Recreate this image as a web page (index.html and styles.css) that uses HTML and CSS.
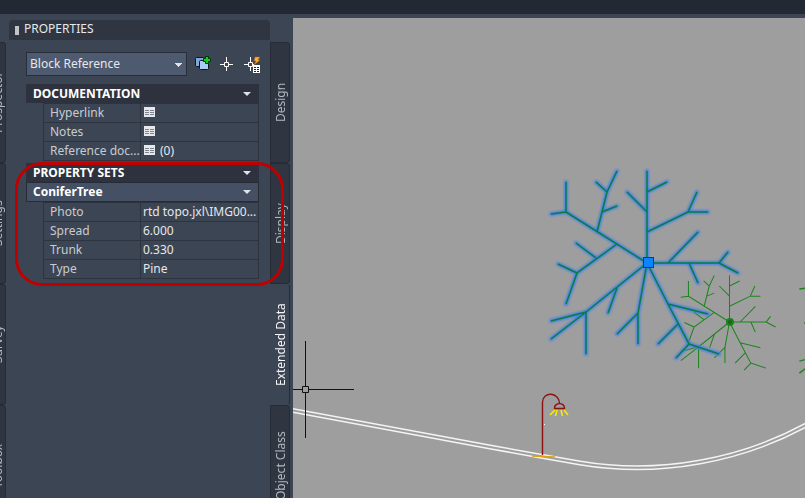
FILE: index.html
```html
<!DOCTYPE html>
<html lang="en">

<head>
    <meta charset="UTF-8">
    <meta name="viewport" content="width=device-width, initial-scale=1.0">
    <title>Properties</title>
    <link rel="stylesheet" href="styles.css">
</head>

<body>
    <div class="topbar"></div>
    <div class="workspace">
        <div class="tabs tabs-left">
            <button class="tab">Prospector</button>
            <button class="tab">Settings</button>
            <button class="tab">Survey</button>
            <button class="tab">Toolbox</button>
        </div>

        <div class="palette">
            <div class="palette-title">
                <span class="grip"></span>
                <h1>PROPERTIES</h1>
            </div>

            <div class="palette-body">
                <div class="toolbar">
                    <select class="object-select" aria-label="Object type">
                        <option>Block Reference</option>
                    </select>
                    <button class="tool" aria-label="Toggle pickadd">
                        <svg width="18" height="18" viewBox="0 0 18 18">
                            <rect x="2.5" y="2.5" width="9" height="9" rx="1" fill="#7fa9dc" stroke="#10151e" />
                            <rect x="6.5" y="5.5" width="9" height="9" rx="1" fill="#a9cdf2" stroke="#10151e" />
                            <path d="M10.500 3.500h2v-2h3v2h2v3h-2v2h-3v-2h-2z" fill="#0bd11a" stroke="#0a3010" />
                        </svg>
                    </button>
                    <button class="tool" aria-label="Select objects">
                        <svg width="18" height="18" viewBox="0 0 18 18">
                            <path d="M9.500 2v5M9.500 11v5M3 9.500h4M12 9.500h4M7.500 7.500h4v4h-4z" fill="none" stroke="#fff" />
                        </svg>
                    </button>
                    <button class="tool tool-wide" aria-label="Quick select">
                        <svg width="20" height="18" viewBox="0 0 20 18">
                            <path d="M9.500 2v5M9.500 11v5M3 9.500h4M11 9.500h2M7.500 7.500h4v4h-4z" fill="none" stroke="#fff" />
                            <path d="M14 2h5l-2 3h2l-6 5 2-4h-2z" fill="#ffb02e" stroke="#a85510" stroke-width=".5" />
                            <path d="M12 10h7v8h-7z" fill="#fff" />
                            <path d="M13 12.500h2M16 12.500h2M13 14.500h2M16 14.500h2M13 16.500h2M16 16.500h2" stroke="#222" />
                        </svg>
                    </button>
                </div>

                <section class="group">
                    <button class="group-head">DOCUMENTATION<span class="arrow"></span></button>
                    <table class="props">
                        <tr>
                            <th scope="row">Hyperlink</th>
                            <td><span class="sheet"></span></td>
                        </tr>
                        <tr>
                            <th scope="row">Notes</th>
                            <td><span class="sheet"></span></td>
                        </tr>
                        <tr>
                            <th scope="row">Reference doc...</th>
                            <td><span class="sheet"></span>(0)</td>
                        </tr>
                    </table>
                </section>

                <section class="group marked">
                    <button class="group-head">PROPERTY SETS<span class="arrow"></span></button>
                    <button class="group-head set-head">ConiferTree<span class="arrow"></span></button>
                    <table class="props">
                        <tr>
                            <th scope="row">Photo</th>
                            <td>rtd topo.jxl\IMG00...</td>
                        </tr>
                        <tr>
                            <th scope="row">Spread</th>
                            <td>6.000</td>
                        </tr>
                        <tr>
                            <th scope="row">Trunk</th>
                            <td>0.330</td>
                        </tr>
                        <tr>
                            <th scope="row">Type</th>
                            <td>Pine</td>
                        </tr>
                    </table>
                </section>
            </div>
        </div>

        <div class="tabs tabs-right">
            <button class="tab">Design</button>
            <button class="tab">Display</button>
            <button class="tab active">Extended Data</button>
            <button class="tab">Object Class</button>
        </div>

        <main class="drawing">
            <svg viewBox="293 18 512 480" preserveAspectRatio="xMinYMin slice">
                <defs>
                    <filter id="glow" x="-10%" y="-10%" width="120%" height="120%">
                        <feGaussianBlur stdDeviation="1.2" />
                    </filter>
                    <g id="tree">
                        <!-- top -->
                        <path d="M0-92V0M20-81L0-71M-20-71L0-51M0-31L41-51H61M41-51L50-71" />
                        <!-- upper left -->
                        <path d="M0 0L-81-51V-81M-96-49L-81-51M-50-31L-40-71L-30-92M-51-81L-40-71M-45-51L-30-57" />
                        <path d="M-30-19L-70 10L-81 41M-71-20L-51-5M-89 1L-70 10" />
                        <!-- lower left -->
                        <path d="M0 0L-61 49V91M-96 58L-61 49L-96 76M-30 25L-39 50" />
                        <!-- bottom -->
                        <path d="M0 0L-9 50V81M-9 50L-30 71" />
                        <path d="M0 0L21 41L42 81L29 95M21 41L61 51M31 61L11 81M42 81L72 91" />
                        <!-- right -->
                        <path d="M0 0H72L81-11M72 0L91 10M21 0L51-31M42 0L51 20" />
                    </g>
                </defs>

                <!-- road edge -->
                <path class="road" d="M290 410L490 447L540 456L580 463Q640 473 700 462Q757 452 808 424" />
                <path class="road-gap" d="M290 410L490 447L540 456L580 463Q640 473 700 462Q757 452 808 424" />
                <path d="M532 456l23 1" stroke="#d9a514" stroke-width="1.500" />

                <!-- trees -->
                <g class="tree-plain">
                    <use href="#tree" transform="translate(729.500 322) scale(.507)" />
                    <use href="#tree" transform="translate(864 322) scale(.673)" />
                    <circle cx="730" cy="322" r="3" fill="#245f24" />
                </g>
                <use href="#tree" class="tree-glow" transform="translate(647 263)" filter="url(#glow)" />
                <use href="#tree" class="tree-picked" transform="translate(647 263)" />
                <rect x="643.500" y="257.500" width="10" height="10" fill="#0a84ff" stroke="#173a5e" />

                <!-- street lamp -->
                <path d="M542.500 455V402C543 391 559 392 559.500 403M554.500 408.500C554 402 565 402 564.500 408.500Z" fill="none" stroke="#8c1212" stroke-width="1.400" />
                <path d="M555 410l-5 5M557 410l-1.500 6M561 410l1.500 6M564 410l4 5" stroke="#f4f000" stroke-width="1.500" />
                <rect x="544" y="424" width="1" height="1" fill="#fff" />

                <!-- cursor -->
                <path class="cursor" d="M305.500 341V386M305.500 393V438M293 389.500H302M309 389.500H354M302.500 386.500h6v6h-6z" />
            </svg>
        </main>
    </div>
</body>

</html>
```
FILE: styles.css
```css
* {
    margin: 0;
    padding: 0;
    box-sizing: border-box;
}

body {
    height: 100vh;
    overflow: hidden;
    display: flex;
    flex-direction: column;
    background: #3c4554;
    color: #e6e8eb;
    font: 12px/18px "Noto Sans", "Open Sans", sans-serif;
}

button,
select {
    font: inherit;
    color: inherit;
    border: none;
    background: none;
}

.topbar {
    flex: none;
    height: 14px;
    background: #222933;
}

.workspace {
    flex: 1;
    min-height: 0;
    display: flex;
}

/* side tabs */
.tabs {
    flex: none;
    display: flex;
    flex-direction: column;
    padding-top: 28px;
    overflow: hidden;
}

.tabs-left {
    width: 6px;
    align-items: flex-end;
}

.tabs-right {
    width: 20px;
}

.tab {
    flex: none;
    width: 20px;
    height: 121px;
    padding-right: 2px;
    writing-mode: vertical-rl;
    transform: rotate(180deg);
    text-align: center;
    line-height: 16px;
    background: #2f3541;
    color: #b4b8be;
    border: 1px solid #262b35;
    border-radius: 3px 0 0 3px;
}

.tabs-left .tab {
    padding-right: 4px;
    line-height: 14px;
}

.tab.active {
    background: #3c4554;
    color: #f4f5f6;
    border-color: transparent transparent transparent #262b35;
}

/* palette */
.palette {
    flex: none;
    width: 264px;
    padding: 6px 0 0 3px;
}

.palette-title {
    display: flex;
    align-items: center;
    gap: 5px;
    height: 20px;
    padding: 0 0 2px 6px;
    background: #2f3541;
    border-radius: 4px 4px 0 0;
}

.palette-title h1 {
    font-size: 12px;
    font-weight: 400;
}

.grip {
    width: 4px;
    height: 9px;
    margin-top: 2px;
    background: radial-gradient(circle at 1px 1px, #c0c4ca 50%, transparent 55%) 0 0 / 2px 2px;
}

.palette-body {
    padding: 12px 11px 0 17px;
}

.toolbar {
    display: flex;
    align-items: center;
    gap: 6px;
    margin-bottom: 8px;
}

.object-select {
    flex: none;
    width: 161px;
    height: 24px;
    padding: 0 3px;
    appearance: none;
    background-color: #4e5a6f;
    background-image: linear-gradient(to top right, transparent 50%, #e0e2e5 50%), linear-gradient(to top left, transparent 50%, #e0e2e5 50%);
    background-repeat: no-repeat;
    background-size: 4px 4px;
    background-position: 148px 10px, 152px 10px;
    border: 1px solid #282e39;
}

.tool {
    flex: none;
    width: 18px;
    height: 18px;
}

.tool-wide {
    width: 20px;
}

.tool svg {
    display: block;
}

.group {
    position: relative;
    margin-bottom: 2px;
}

.group-head {
    display: flex;
    align-items: center;
    justify-content: space-between;
    width: 100%;
    height: 19px;
    padding: 0 8px 0 7px;
    background: #2d323e;
    color: #fff;
    font-weight: 700;
}

.set-head {
    height: 20px;
    background: #465064;
    border: 1px solid #262b35;
    padding: 0 7px 0 6px;
}

.arrow {
    border: 4px solid transparent;
    border-top-color: #e0e2e5;
    border-bottom: none;
}

.props {
    width: calc(100% - 17px);
    margin-left: 17px;
    border-collapse: collapse;
    table-layout: fixed;
}

.props th,
.props td {
    height: 19px;
    border: 1px solid #2d333f;
    line-height: 18px;
    text-align: left;
    white-space: nowrap;
}

.props th {
    width: 97px;
    padding-left: 6px;
    font-weight: 400;
    color: #c9cccf;
}

.props td {
    padding-left: 2px;
}

.sheet {
    display: inline-block;
    width: 11px;
    height: 10px;
    margin: 0 5px 0 1px;
    border: 1px solid #e6e8eb;
    border-top-width: 2px;
    background: linear-gradient(90deg, transparent 4px, #e6e8eb 4px 5px, transparent 5px), repeating-linear-gradient(#e6e8eb 0 1px, #7d8490 1px 2px);
}

/* highlighted group */
.marked::after {
    content: "";
    position: absolute;
    inset: -1px -25px -7px -11px;
    border: 3px solid #c00000;
    border-radius: 27px;
    pointer-events: none;
}

.marked {
    z-index: 2;
}

/* drawing area */
.drawing {
    flex: 1;
    min-width: 0;
    margin: 4px 0 0 3px;
    background: #9e9e9e;
}

.drawing svg {
    display: block;
    width: 100%;
    height: 100%;
}

.road,
.road-gap,
.tree-plain,
.tree-glow,
.tree-picked,
.cursor {
    fill: none;
}

.road {
    stroke: #f4f4f4;
    stroke-width: 5;
}

.road-gap {
    stroke: #9e9e9e;
    stroke-width: 2;
}

.tree-plain {
    stroke: #1b851b;
    stroke-width: 2;
}

.tree-glow {
    stroke: #4580e8;
    stroke-width: 4;
    stroke-linecap: round;
}

.tree-picked {
    stroke: #067c45;
    stroke-width: 1.5px;
}

.cursor {
    stroke: #111;
}
```
